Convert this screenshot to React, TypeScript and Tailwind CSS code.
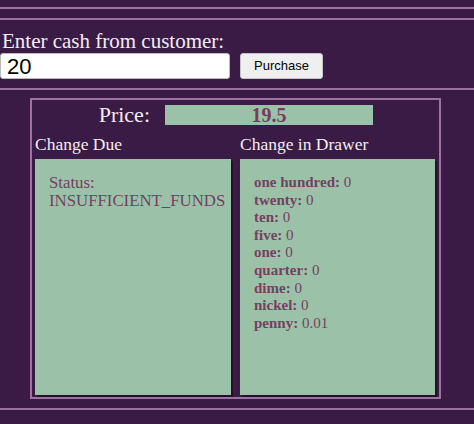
import React from "react";

const drawer: [string, string][] = [
  ["one hundred", "0"],
  ["twenty", "0"],
  ["ten", "0"],
  ["five", "0"],
  ["one", "0"],
  ["quarter", "0"],
  ["dime", "0"],
  ["nickel", "0"],
  ["penny", "0.01"],
];

export default function App() {
  return (
    <div
      className="w-[474px] h-[424px] overflow-hidden bg-[#3a1b45] text-[#f4eef2]"
      style={{ fontFamily: '"Liberation Serif", "DejaVu Serif", serif' }}
    >
      <div className="h-[7px]" />
      <div className="h-[2px] bg-[#9a72a2]" />
      <div className="h-[9px]" />
      <div className="h-[2px] bg-[#9a72a2]" />
      <div className="pt-[9px]">
        <label className="block text-[21px] leading-[24px] pl-[2px]">Enter cash from customer:</label>
        <div className="flex items-center gap-[10px] mt-0">
          <input
            defaultValue="20"
            className="w-[230px] h-[26px] bg-white rounded-[3px] text-black text-[22px] px-[6px] outline-none border border-[#bbb]"
            style={{ fontFamily: '"Liberation Sans", Arial, sans-serif' }}
          />
          <button
            className="w-[83px] h-[26px] bg-[#efefef] rounded-[3px] border border-[#c4c4c4] text-black text-[13px]"
            style={{ fontFamily: '"Liberation Sans", Arial, sans-serif' }}
          >
            Purchase
          </button>
        </div>
      </div>
      <div className="h-[2px] bg-[#9a72a2] mt-[9px]" />
      <div className="ml-[30px] mt-[8px] w-[411px] h-[301px] border-2 border-[#9d73a3] px-[3px] pt-[4px]">
        <div className="flex items-center h-[21px]">
          <div className="w-[130px] text-right pr-[15px] text-[22px] leading-[22px]">Price:</div>
          <div className="w-[208px] h-[20px] bg-[#9bc1a8] text-[#7a3b58] text-[20px] leading-[20px] font-bold text-center">
            19.5
          </div>
        </div>
        <div className="flex gap-[9px] mt-[8px]">
          <div className="w-[196px]">
            <div className="text-[17.5px] leading-[22px] h-[26px]">Change Due</div>
            <div className="h-[236px] bg-[#9bc1a8] shadow-[2px_2px_0_#241028] text-[#754160] text-[16.8px] leading-[17.5px] pl-[14px] pt-[15px]">
              <div>Status:</div>
              <div>INSUFFICIENT_FUNDS</div>
            </div>
          </div>
          <div className="w-[195px]">
            <div className="text-[17.5px] leading-[22px] h-[26px]">Change in Drawer</div>
            <div className="h-[236px] bg-[#9bc1a8] shadow-[2px_2px_0_#241028] text-[#754160] text-[15px] leading-[17.6px] pl-[14px] pt-[15px]">
              {drawer.map(([k, v]) => (
                <div key={k}>
                  <span className="font-bold">{k}:</span> {v}
                </div>
              ))}
            </div>
          </div>
        </div>
      </div>
      <div className="h-[2px] bg-[#9a72a2] mt-[9px]" />
    </div>
  );
}
